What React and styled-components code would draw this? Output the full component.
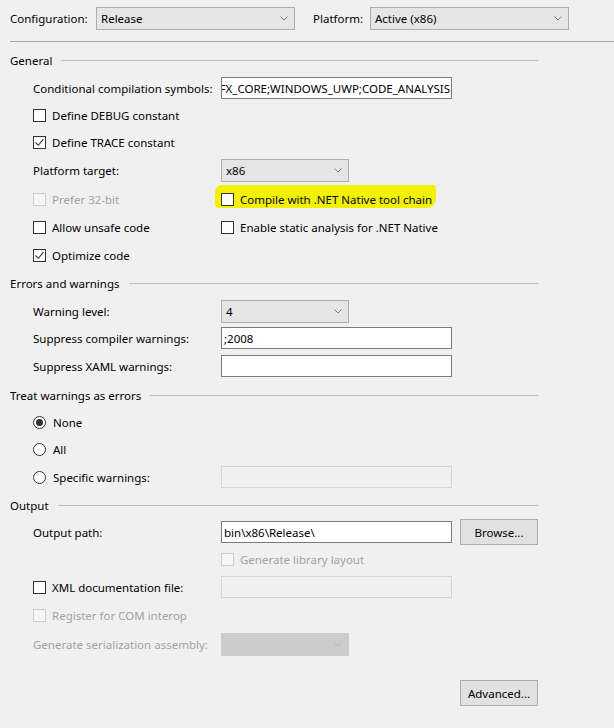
import React from "react";
import styled, { createGlobalStyle, css } from "styled-components";

const GlobalStyle = createGlobalStyle`
  html, body { margin: 0; padding: 0; background: #f0f0f0; }
  body {
    font-family: "Noto Sans", "Open Sans", "DejaVu Sans", sans-serif;
    font-size: 11.5px;
    color: #000;
  }
  * { box-sizing: border-box; }
`;

const Page = styled.div`
  width: 614px;
  min-height: 728px;
  background: #f0f0f0;
  display: flex;
  flex-direction: column;
`;

const TopBar = styled.div`
  display: flex;
  align-items: center;
  padding: 7px 0 0 10px;
`;

const TopLabel = styled.span`
  width: ${(p) => p.$w}px;
  flex: none;
  white-space: nowrap;
`;

const SelectBox = styled.div`
  width: ${(p) => p.$w}px;
  height: 23px;
  flex: none;
  display: flex;
  align-items: center;
  justify-content: space-between;
  padding: 0 6px 0 4px;
  background: ${(p) => (p.$disabled ? "#cccccc" : "#e5e5e5")};
  border: 1px solid ${(p) => (p.$disabled ? "#cccccc" : "#adadad")};
  margin-right: ${(p) => p.$mr || 0}px;
`;

const Separator = styled.div`
  height: 1px;
  margin: 11px 0 4px 10px;
  background: #a8a8a8;
`;

const SectionHeader = styled.div`
  display: flex;
  align-items: center;
  height: 28px;
  padding: 0 76px 0 10px;
`;

const HeaderTitle = styled.span`
  white-space: nowrap;
`;

const HeaderLine = styled.div`
  flex: 1;
  height: 1px;
  margin-left: 9px;
  background: #bcbcbc;
`;

const Row = styled.div`
  display: flex;
  align-items: center;
  height: ${(p) => p.$h || 28}px;
  padding-left: 33px;
`;

const LeftCell = styled.div`
  width: 188px;
  flex: none;
  display: flex;
  align-items: center;
  white-space: nowrap;
  color: ${(p) => (p.$disabled ? "#a2a2a2" : "#000")};
`;

const CheckItem = styled.label`
  display: inline-flex;
  align-items: center;
  gap: 6px;
  white-space: nowrap;
  color: ${(p) => (p.$disabled ? "#a2a2a2" : "#000")};
  ${(p) =>
    p.$highlight &&
    css`
      background: #f2f200;
      padding: 7px 4px 1px 6px;
      margin: -6px 0 0 -6px;
      border-radius: 7px 3px 9px 4px;
    `}
`;

const Box = styled.span`
  width: 13px;
  height: 13px;
  flex: none;
  display: inline-flex;
  align-items: center;
  justify-content: center;
  background: ${(p) => (p.$disabled ? "#f7f7f7" : "#fff")};
  border: 1px solid ${(p) => (p.$disabled ? "#cccccc" : "#333333")};
`;

const RadioCircle = styled.span`
  width: 13px;
  height: 13px;
  flex: none;
  border-radius: 50%;
  border: 1px solid #333;
  background: #fff;
  display: inline-flex;
  align-items: center;
  justify-content: center;
`;

const RadioDot = styled.span`
  width: 7px;
  height: 7px;
  border-radius: 50%;
  background: #333;
`;

const RadioItem = styled.label`
  display: inline-flex;
  align-items: center;
  gap: 7px;
  white-space: nowrap;
`;

const TextBox = styled.div`
  width: 231px;
  height: 22px;
  flex: none;
  display: flex;
  align-items: center;
  justify-content: ${(p) => (p.$end ? "flex-end" : "flex-start")};
  overflow: hidden;
  padding: 0 ${(p) => (p.$end ? 1 : 2)}px;
  white-space: nowrap;
  background: ${(p) => (p.$disabled ? "#f0f0f0" : "#fff")};
  border: 1px solid ${(p) => (p.$disabled ? "#d4d4d4" : "#7a7a7a")};
`;

const Button = styled.button`
  font: inherit;
  color: #000;
  width: 78px;
  height: 26px;
  flex: none;
  background: #e1e1e1;
  border: 1px solid #adadad;
  padding: 0;
  margin-left: ${(p) => p.$ml || 0}px;
`;

const Footer = styled.div`
  display: flex;
  justify-content: flex-end;
  padding: 21px 76px 0 0;
`;

const Chevron = ({ disabled }) => (
  <svg width="8" height="5" viewBox="0 0 8 5">
    <path
      d="M0.5 0.5 L4 4 L7.5 0.5"
      fill="none"
      stroke={disabled ? "#b4b4b4" : "#7a7a7a"}
      strokeWidth="1"
    />
  </svg>
);

const Select = ({ value, w, disabled, mr }) => (
  <SelectBox $w={w} $disabled={disabled} $mr={mr}>
    <span>{value}</span>
    <Chevron disabled={disabled} />
  </SelectBox>
);

const Check = ({ label, checked, disabled, highlight }) => (
  <CheckItem $disabled={disabled} $highlight={highlight}>
    <Box $disabled={disabled}>
      {checked && (
        <svg width="11" height="11" viewBox="0 0 11 11">
          <path d="M1.5 5.5 L4.3 8.3 L9.5 2.2" fill="none" stroke="#333" strokeWidth="1.1" />
        </svg>
      )}
    </Box>
    <span>{label}</span>
  </CheckItem>
);

const Radio = ({ label, selected }) => (
  <RadioItem>
    <RadioCircle>{selected && <RadioDot />}</RadioCircle>
    <span>{label}</span>
  </RadioItem>
);

const Header = ({ title }) => (
  <SectionHeader>
    <HeaderTitle>{title}</HeaderTitle>
    <HeaderLine />
  </SectionHeader>
);

export default function App() {
  return (
    <Page>
      <GlobalStyle />
      <TopBar>
        <TopLabel $w={86}>Configuration:</TopLabel>
        <Select value="Release" w={199} mr={18} />
        <TopLabel $w={57}>Platform:</TopLabel>
        <Select value="Active (x86)" w={199} />
      </TopBar>
      <Separator />

      <Header title="General" />
      <Row>
        <LeftCell>Conditional compilation symbols:</LeftCell>
        <TextBox $end>NETFX_CORE;WINDOWS_UWP;CODE_ANALYSIS</TextBox>
      </Row>
      <Row $h={27}>
        <Check label="Define DEBUG constant" />
      </Row>
      <Row $h={27}>
        <Check label="Define TRACE constant" checked />
      </Row>
      <Row $h={29}>
        <LeftCell>Platform target:</LeftCell>
        <Select value="x86" w={128} />
      </Row>
      <Row>
        <LeftCell>
          <Check label="Prefer 32-bit" disabled />
        </LeftCell>
        <Check label="Compile with .NET Native tool chain" highlight />
      </Row>
      <Row>
        <LeftCell>
          <Check label="Allow unsafe code" />
        </LeftCell>
        <Check label="Enable static analysis for .NET Native" />
      </Row>
      <Row>
        <Check label="Optimize code" checked />
      </Row>

      <Header title="Errors and warnings" />
      <Row>
        <LeftCell>Warning level:</LeftCell>
        <Select value="4" w={128} />
      </Row>
      <Row $h={26}>
        <LeftCell>Suppress compiler warnings:</LeftCell>
        <TextBox>;2008</TextBox>
      </Row>
      <Row $h={30}>
        <LeftCell>Suppress XAML warnings:</LeftCell>
        <TextBox />
      </Row>

      <Header title="Treat warnings as errors" />
      <Row $h={26}>
        <Radio label="None" selected />
      </Row>
      <Row>
        <Radio label="All" />
      </Row>
      <Row>
        <LeftCell>
          <Radio label="Specific warnings:" />
        </LeftCell>
        <TextBox $disabled />
      </Row>

      <Header title="Output" />
      <Row $h={26}>
        <LeftCell>Output path:</LeftCell>
        <TextBox>bin\x86\Release\</TextBox>
        <Button $ml={8}>Browse...</Button>
      </Row>
      <Row>
        <LeftCell />
        <Check label="Generate library layout" disabled />
      </Row>
      <Row>
        <LeftCell>
          <Check label="XML documentation file:" />
        </LeftCell>
        <TextBox $disabled />
      </Row>
      <Row $h={29}>
        <Check label="Register for COM interop" disabled />
      </Row>
      <Row $h={29}>
        <LeftCell $disabled>Generate serialization assembly:</LeftCell>
        <Select value="" w={128} disabled />
      </Row>

      <Footer>
        <Button>Advanced...</Button>
      </Footer>
    </Page>
  );
}
